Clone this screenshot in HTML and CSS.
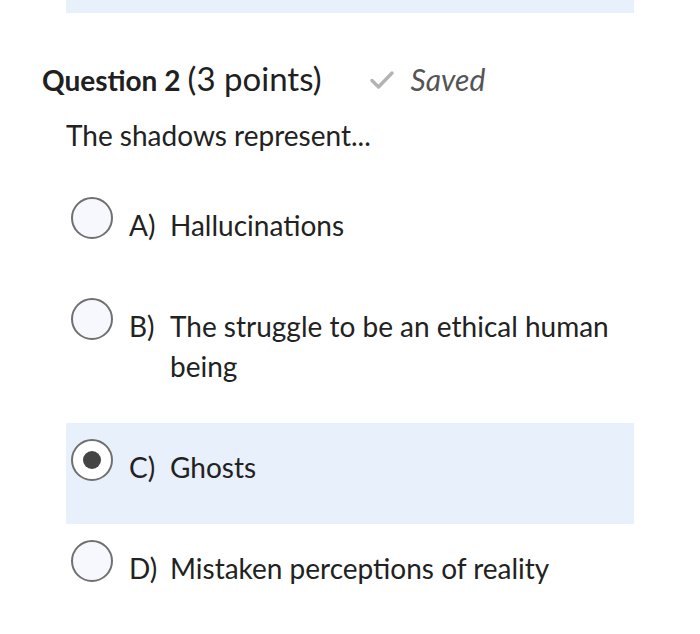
FILE: index.html
```html
<!DOCTYPE html>
<html>
<head>
<meta charset="utf-8">
<link rel="stylesheet" href="styles.css">
</head>
<body>
<div class="page">
  <div class="prev-band"></div>
  <div class="q-head">
    <h2 class="q-title"><span class="q-num">Question 2</span> <span class="q-pts">(3 points)</span></h2>
    <div class="saved">
      <svg class="check" width="26" height="20" viewBox="0 0 26 20"><path d="M3 10.5 L9.5 17 L23 3" fill="none" stroke="#b3b3b3" stroke-width="3.4" stroke-linecap="round" stroke-linejoin="round"/></svg>
      <span class="saved-text">Saved</span>
    </div>
  </div>
  <p class="q-text">The shadows represent...</p>
  <div class="options">
    <label class="opt">
      <span class="radio"></span>
      <span class="letter">A)</span>
      <span class="ans">Hallucinations</span>
    </label>
    <label class="opt">
      <span class="radio"></span>
      <span class="letter">B)</span>
      <span class="ans">The struggle to be an ethical human being</span>
    </label>
    <label class="opt selected">
      <span class="radio checked"><span class="dot"></span></span>
      <span class="letter">C)</span>
      <span class="ans">Ghosts</span>
    </label>
    <label class="opt">
      <span class="radio"></span>
      <span class="letter">D)</span>
      <span class="ans">Mistaken perceptions of reality</span>
    </label>
  </div>
</div>
</body>
</html>
```

FILE: styles.css
```css
html, body {
  margin: 0;
  padding: 0;
  background: #ffffff;
}
body {
  font-family: Lato, "Noto Sans", sans-serif;
  color: #222222;
}
.page {
  width: 700px;
  height: 634px;
  overflow: hidden;
}
.prev-band {
  margin: 0 66px;
  height: 13px;
  background: #e8f0fb;
}
.q-head {
  display: flex;
  align-items: center;
  padding: 46px 0 0 42px;
  height: 40px;
}
.q-title {
  margin: 0;
  font-size: 28px;
  line-height: 40px;
  font-weight: 400;
  color: #202020;
  white-space: nowrap;
}
.q-num {
  font-weight: 700;
}
.q-pts {
  font-size: 33px;
}
.saved {
  display: flex;
  align-items: center;
  margin-left: 47px;
  gap: 16px;
}
.check {
  display: block;
  margin-top: 2px;
}
.saved-text {
  font-style: italic;
  font-size: 30px;
  line-height: 40px;
  color: #555555;
}
.q-text {
  margin: 16px 0 0 66px;
  font-size: 28px;
  line-height: 40px;
  color: #222222;
}
.options {
  margin: 26px 66px 0 66px;
  display: flex;
  flex-direction: column;
}
.opt {
  display: grid;
  grid-template-columns: 42px 41px 1fr;
  column-gap: 0;
  padding: 16px 20px 37px 5px;
  align-items: start;
}
.opt.selected {
  background: #e8f0fb;
}
.radio {
  grid-column: 1;
  width: 38px;
  height: 38px;
  border: 2px solid #707070;
  border-radius: 50%;
  background: #f7f8fd;
  display: flex;
  align-items: center;
  justify-content: center;
}
.radio.checked {
  background: #ffffff;
}
.dot {
  width: 18px;
  height: 18px;
  border-radius: 50%;
  background: #444444;
}
.letter {
  grid-column: 2;
  margin-left: 16px;
  margin-top: 8px;
  font-size: 28px;
  line-height: 40px;
  color: #222222;
  white-space: nowrap;
}
.ans {
  grid-column: 3;
  margin-left: 16px;
  margin-top: 8px;
  font-size: 28px;
  line-height: 40px;
  color: #222222;
}
```
